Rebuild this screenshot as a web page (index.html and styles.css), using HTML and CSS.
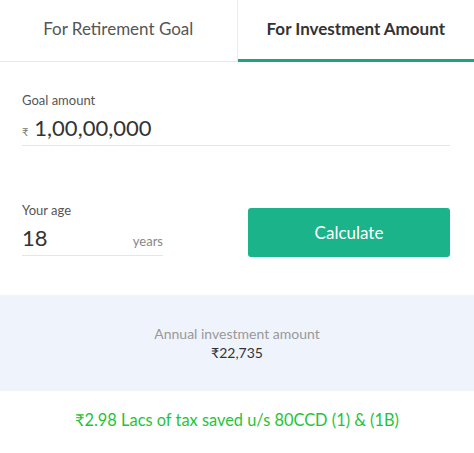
FILE: index.html
```html
<!DOCTYPE html>
<html>
<head>
<meta charset="utf-8">
<link rel="stylesheet" href="styles.css">
</head>
<body>
<div class="page">
  <div class="tabs">
    <div class="tab">For Retirement Goal</div>
    <div class="tab active">For Investment Amount</div>
  </div>
  <div class="form">
    <div class="field goal">
      <div class="label">Goal amount</div>
      <div class="input"><span class="rupee">₹</span><span class="value">1,00,00,000</span></div>
    </div>
    <div class="row">
      <div class="field age">
        <div class="label">Your age</div>
        <div class="input"><span class="value">18</span><span class="unit">years</span></div>
      </div>
      <button class="calc">Calculate</button>
    </div>
  </div>
  <div class="result">
    <div class="result-label">Annual investment amount</div>
    <div class="result-value">₹22,735</div>
  </div>
  <div class="saved">₹2.98 Lacs of tax saved u/s 80CCD (1) &amp; (1B)</div>
</div>
</body>
</html>
```

FILE: styles.css
```css
html, body {
  margin: 0;
  padding: 0;
  background: #fff;
}
.page {
  width: 474px;
  font-family: Lato, "Open Sans", sans-serif;
  color: #333;
}
.tabs {
  display: flex;
  height: 62px;
}
.tab {
  flex: 1;
  display: flex;
  align-items: center;
  justify-content: center;
  font-size: 17px;
  color: #555;
  border-bottom: 1px solid #e8e8e8;
  box-sizing: border-box;
  padding-bottom: 4px;
}
.tab:first-child {
  border-right: 1px solid #ececec;
}
.tab.active {
  font-weight: 700;
  color: #333;
  border-bottom: 3px solid #1fa37c;
  padding-bottom: 2px;
}
.form {
  padding: 30px 24px 0 22px;
}
.label {
  font-size: 13px;
  color: #555;
  line-height: 16px;
}
.input {
  display: flex;
  align-items: baseline;
  border-bottom: 1px solid #e6e6e6;
  height: 38px;
  box-sizing: border-box;
  padding-top: 7px;
}
.rupee {
  font-size: 11px;
  color: #777;
  margin-right: 6px;
}
.value {
  font-size: 22px;
  line-height: 26px;
  color: #333;
}
.row {
  display: flex;
  align-items: flex-start;
  margin-top: 56px;
  gap: 85px;
}
.age {
  width: 141px;
}
.age .input {
  justify-content: space-between;
}
.unit {
  font-size: 13px;
  color: #888;
}
.calc {
  flex: 1;
  height: 49px;
  margin-top: 6px;
  background: #1ab38a;
  border: none;
  border-radius: 3px;
  color: #fff;
  font-family: inherit;
  font-size: 17px;
}
.result {
  margin-top: 38px;
  height: 96px;
  background: #eff3fc;
  display: flex;
  flex-direction: column;
  align-items: center;
  justify-content: center;
  gap: 2px;
}
.result-label {
  font-size: 14px;
  color: #999;
}
.result-value {
  font-size: 14px;
  color: #333;
}
.saved {
  text-align: center;
  margin-top: 19px;
  font-size: 16.4px;
  color: #1fc43a;
}
```
